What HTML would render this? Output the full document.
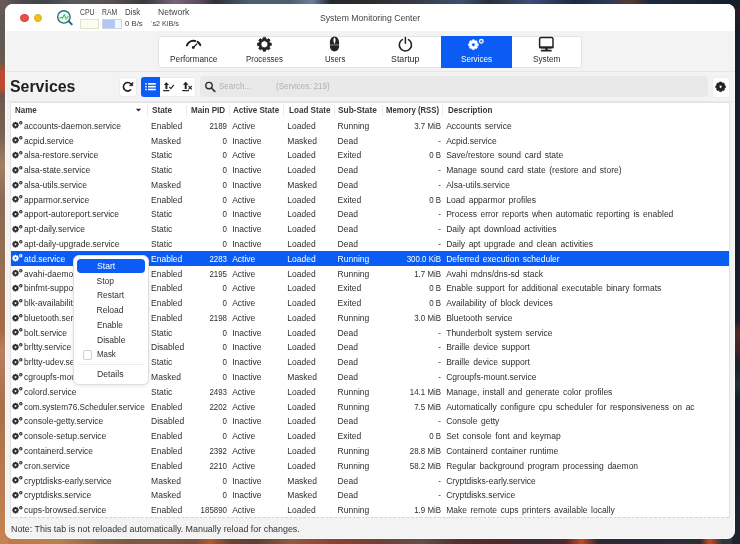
<!DOCTYPE html><html><head><meta charset="utf-8"><style>
html,body{margin:0;padding:0}
body{width:740px;height:544px;overflow:hidden;position:relative;font-family:"Liberation Sans", sans-serif}
.a{position:absolute}
.t{position:absolute;white-space:pre;line-height:1.15;font-family:"Liberation Sans", sans-serif}
</style></head><body>
<div class="a" style="left:0.00px;top:0.00px;width:740.00px;height:8.00px;background:linear-gradient(90deg,#6a5a55 0.0%,#4a4a4c 2.7%,#404448 6.1%,#585a5e 10.1%,#5a5050 14.9%,#3a3a40 19.6%,#7a6478 23.6%,#5a4a5a 27.0%,#303038 29.1%,#4a6070 33.8%,#4a6070 39.2%,#6a80a0 42.2%,#282830 44.6%,#302a2e 50.0%,#383c48 56.8%,#3a5070 62.2%,#2a2e38 66.2%,#3a4e7a 71.6%,#202a40 77.7%,#2a3a5a 82.4%,#5a3a2a 85.1%,#1e2840 87.8%,#1a2438 94.6%,#141c28 100.0%)"></div>
<div class="a" style="left:0.00px;top:536.00px;width:740.00px;height:8.00px;background:linear-gradient(90deg,#c87840 0.0%,#bc7c4c 2.0%,#b88050 8.1%,#8a6448 13.5%,#7a5a44 17.6%,#805842 21.6%,#7a5040 26.4%,#b05a30 28.4%,#6a4434 31.1%,#5a4034 34.5%,#905a40 39.2%,#8a4030 45.9%,#704038 51.4%,#605048 56.8%,#503030 62.2%,#502828 67.6%,#383038 73.0%,#502828 76.4%,#c04a28 78.6%,#2e2a32 80.8%,#282c38 87.8%,#2c2c34 94.6%,#c84a20 95.9%,#2a383c 97.6%,#28383c 100.0%)"></div>
<div class="a" style="left:0.00px;top:0.00px;width:8.00px;height:544.00px;background:linear-gradient(180deg,#6a5a55 0.0%,#5e5856 5.5%,#6a5850 11.4%,#b84a30 13.2%,#c04a30 16.2%,#6a5850 17.6%,#7a6452 25.0%,#a08064 30.3%,#8a6a55 36.8%,#96704f 50.0%,#a86a48 60.7%,#b88060 64.3%,#a87048 75.0%,#b87a50 88.2%,#c8844e 100.0%)"></div>
<div class="a" style="left:732.00px;top:0.00px;width:8.00px;height:544.00px;background:linear-gradient(180deg,#161c2a 0.0%,#2a1c24 2.2%,#161c2a 5.5%,#1a1e2c 58.8%,#4a2a28 61.0%,#3a2228 64.7%,#1a1e2c 67.1%,#1e3038 70.8%,#161c2a 73.5%,#1e2430 100.0%)"></div>
<div class="a" style="left:5px;top:4px;width:730px;height:535px;border-radius:8px;overflow:hidden;background:#f3f3f3;will-change:transform">
<div class="a" style="left:-5px;top:-4px;width:740px;height:544px">
<div class="a" style="left:5.00px;top:4.00px;width:730.00px;height:27.00px;background:#ffffff"></div>
<div class="a" style="left:20.1px;top:13.5px;width:8.8px;height:8.8px;box-sizing:border-box;border-radius:50%;background:#ea5048;border:0.6px solid #d8433f"></div>
<div class="a" style="left:33.5px;top:13.5px;width:8.8px;height:8.8px;box-sizing:border-box;border-radius:50%;background:#f4c01e;border:0.6px solid #dcaa1a"></div>
<svg class="a" style="left:54px;top:8px" width="22" height="20" viewBox="54 8 22 20"><circle cx="63.9" cy="16.9" r="6.2" fill="#ecf9f4" stroke="#2d6e80" stroke-width="1.4"/><path d="M59.6,18.3 L61.4,17.2 L62.5,18.3 L64.3,14.5 L66.1,19.1 L68.3,16" fill="none" stroke="#58bc5c" stroke-width="1.1" stroke-linejoin="round"/><path d="M68.9,21.4 L71.7,24.3" stroke="#2a6a8e" stroke-width="2" stroke-linecap="round"/></svg>
<div class="t" style="left:79.90px;top:8px;font-size:8.4px;font-weight:400;color:#444;transform:scaleX(0.8198);transform-origin:left;">CPU</div>
<div class="t" style="left:102.00px;top:8px;font-size:8.4px;font-weight:400;color:#444;transform:scaleX(0.8161);transform-origin:left;">RAM</div>
<div class="t" style="left:124.60px;top:8px;font-size:8.4px;font-weight:400;color:#444;transform:scaleX(0.9327);transform-origin:left;">Disk</div>
<div class="t" style="left:158.00px;top:8px;font-size:8.4px;font-weight:400;color:#444;transform:scaleX(1.0222);transform-origin:left;">Network</div>
<div class="a" style="left:80.00px;top:19.00px;width:19.00px;height:9.50px;box-sizing:border-box;border:1px solid #dce4cc;background:#fbfdf4"></div>
<div class="a" style="left:101.80px;top:19.00px;width:19.90px;height:9.50px;box-sizing:border-box;border:1px solid #cdd5e4;background:linear-gradient(90deg,#b4c7f4 0%,#b4c7f4 64%,#f5f8ff 64%)"></div>
<div class="t" style="left:124.60px;top:19px;font-size:8.0px;font-weight:400;color:#444;transform:scaleX(0.9707);transform-origin:left;">0 B/s</div>
<div class="t" style="left:149.90px;top:19px;font-size:8.0px;font-weight:400;color:#444;transform:scaleX(0.9027);transform-origin:left;">ˈs2 KiB/s</div>
<div class="t" style="left:319.90px;top:12px;font-size:9.8px;font-weight:400;color:#444;transform:scaleX(0.8846);transform-origin:left;">System Monitoring Center</div>
<div class="a" style="left:158.00px;top:36.00px;width:424.00px;height:31.50px;box-sizing:border-box;border:1px solid #e2e2e2;border-radius:3px;background:#fff"></div>
<div class="a" style="left:441.20px;top:36.00px;width:70.60px;height:31.50px;background:#0a5cf4"></div>
<div class="t" style="left:170.30px;top:55px;font-size:8.5px;font-weight:400;color:#2a2a2a;transform:scaleX(0.9739);transform-origin:left;">Performance</div>
<div class="t" style="left:246.30px;top:55px;font-size:8.5px;font-weight:400;color:#2a2a2a;transform:scaleX(0.9298);transform-origin:left;">Processes</div>
<div class="t" style="left:324.70px;top:55px;font-size:8.5px;font-weight:400;color:#2a2a2a;transform:scaleX(0.9143);transform-origin:left;">Users</div>
<div class="t" style="left:391.20px;top:55px;font-size:8.5px;font-weight:400;color:#2a2a2a;transform:scaleX(1.0363);transform-origin:left;">Startup</div>
<div class="t" style="left:461.00px;top:55px;font-size:8.5px;font-weight:400;color:#fff;transform:scaleX(0.9511);transform-origin:left;">Services</div>
<div class="t" style="left:532.60px;top:55px;font-size:8.5px;font-weight:400;color:#2a2a2a;transform:scaleX(0.9702);transform-origin:left;">System</div>
<svg class="a" style="left:180px;top:34px" width="30" height="20" viewBox="180 34 30 20"><path d="M186.9,45.4 A7.3,7.3 0 0,1 195.3,40.9" fill="none" stroke="#1e1e1e" stroke-width="2" stroke-linecap="round"/><path d="M197.6,41.9 A7.3,7.3 0 0,1 200.3,45.1" fill="none" stroke="#1e1e1e" stroke-width="2" stroke-linecap="round"/><path d="M193.2,47.6 L196.8,44" stroke="#1e1e1e" stroke-width="1.2" stroke-linecap="round"/><circle cx="193.3" cy="47.5" r="1.4" fill="#1e1e1e"/></svg>
<svg class="a" style="left:250px;top:34px" width="30" height="20" viewBox="250 34 30 20"><path fill-rule="evenodd" fill="#222" d="M263.03,38.97 L263.25,37.39 L265.55,37.39 L265.77,38.97 L267.20,39.57 L268.47,38.60 L270.10,40.23 L269.13,41.50 L269.73,42.93 L271.31,43.15 L271.31,45.45 L269.73,45.67 L269.13,47.10 L270.10,48.37 L268.47,50.00 L267.20,49.03 L265.77,49.63 L265.55,51.21 L263.25,51.21 L263.03,49.63 L261.60,49.03 L260.33,50.00 L258.70,48.37 L259.67,47.10 L259.07,45.67 L257.49,45.45 L257.49,43.15 L259.07,42.93 L259.67,41.50 L258.70,40.23 L260.33,38.60 L261.60,39.57 Z M267.90,44.30 A3.5,3.5 0 1,0 260.90,44.30 A3.5,3.5 0 1,0 267.90,44.30 Z" stroke="#222" stroke-width="0.8" stroke-linejoin="round"/></svg>
<svg class="a" style="left:320px;top:34px" width="30" height="20" viewBox="320 34 30 20"><path fill-rule="evenodd" fill="#222" d="M334.5,36.6 C331.8,36.6 329.9,39.5 329.9,42.5 L329.9,46 C329.9,49.2 332,51.4 334.5,51.4 C337,51.4 339.1,49.2 339.1,46 L339.1,42.5 C339.1,39.5 337.2,36.6 334.5,36.6 Z M334.5,37.6 C335.8,38.4 336.1,40.6 334.5,44.2 C332.9,40.6 333.2,38.4 334.5,37.6 Z"/><rect x="329.5" y="44.7" width="10" height="0.55" fill="#e8e8e8"/></svg>
<svg class="a" style="left:390px;top:34px" width="30" height="20" viewBox="390 34 30 20"><path d="M402.3,39.6 A6.1,6.1 0 1,0 408.5,39.6" fill="none" stroke="#222" stroke-width="1.6" stroke-linecap="round"/><path d="M405.4,37.6 L405.4,43.2" stroke="#222" stroke-width="1.5" stroke-linecap="round"/></svg>
<svg class="a" style="left:460px;top:34px" width="30" height="20" viewBox="460 34 30 20"><path fill-rule="evenodd" fill="#fff" d="M472.16,40.79 L472.42,39.80 L474.38,39.80 L474.64,40.79 L475.29,41.06 L476.18,40.54 L477.56,41.92 L477.04,42.81 L477.31,43.46 L478.30,43.72 L478.30,45.68 L477.31,45.94 L477.04,46.59 L477.56,47.48 L476.18,48.86 L475.29,48.34 L474.64,48.61 L474.38,49.60 L472.42,49.60 L472.16,48.61 L471.51,48.34 L470.62,48.86 L469.24,47.48 L469.76,46.59 L469.49,45.94 L468.50,45.68 L468.50,43.72 L469.49,43.46 L469.76,42.81 L469.24,41.92 L470.62,40.54 L471.51,41.06 Z M475.20,44.70 A1.8,1.8 0 1,0 471.60,44.70 A1.8,1.8 0 1,0 475.20,44.70 Z" stroke="#fff" stroke-width="0.6" stroke-linejoin="round"/><circle cx="481.3" cy="41.3" r="1.8" fill="none" stroke="#fff" stroke-width="1.3"/></svg>
<svg class="a" style="left:530px;top:34px" width="30" height="20" viewBox="530 34 30 20"><rect x="539.6" y="37.5" width="13.4" height="10.2" rx="1.6" fill="none" stroke="#222" stroke-width="1.5"/><rect x="539" y="46.3" width="14.6" height="2" fill="#222"/><rect x="545.3" y="48" width="2.4" height="2.2" fill="#222"/><rect x="540.8" y="49.8" width="11" height="1.8" rx="0.9" fill="#222"/></svg>
<div class="a" style="left:5.00px;top:70.50px;width:730.00px;height:1.00px;background:#e6e6e6"></div>
<div class="a" style="left:5.00px;top:100.80px;width:730.00px;height:1.00px;background:#e8e8e8"></div>
<div class="t" style="left:10.40px;top:78px;font-size:16px;font-weight:700;color:#1e1e1e;transform:scaleX(0.9933);transform-origin:left;">Services</div>
<div class="a" style="left:119.00px;top:77.00px;width:18.00px;height:20.00px;box-sizing:border-box;border:1px solid #ebebeb;border-radius:3px;background:#fff"></div>
<svg class="a" style="left:116px;top:75px" width="24" height="25" viewBox="116 75 24 25"><path d="M130.9,83.9 A4.3,4.3 0 1,0 131.0,89.6" fill="none" stroke="#1e1e1e" stroke-width="1.6"/><path d="M132.8,82 L132.8,85.7 L129.2,85.7 Z" fill="#1e1e1e" stroke="#1e1e1e" stroke-width="0.5" stroke-linejoin="round"/></svg>
<div class="a" style="left:141.00px;top:77.00px;width:55.00px;height:20.00px;box-sizing:border-box;border:1px solid #ebebeb;border-radius:3px;background:#fff"></div>
<div class="a" style="left:141.00px;top:77.00px;width:19.00px;height:20.00px;background:#0a5cf4;border-radius:3px 0 0 3px"></div>
<svg class="a" style="left:140px;top:76px" width="20" height="22" viewBox="140 76 20 22"><g fill="#fff"><rect x="145.2" y="83.2" width="1.6" height="1.4"/><rect x="145.2" y="86" width="1.6" height="1.4"/><rect x="145.2" y="88.8" width="1.6" height="1.4"/><rect x="148" y="83.1" width="7.8" height="1.6"/><rect x="148" y="85.9" width="7.8" height="1.6"/><rect x="148" y="88.7" width="7.8" height="1.6"/></g></svg>
<svg class="a" style="left:160px;top:76px" width="36" height="22" viewBox="160 76 36 22"><g fill="#222"><path d="M166.4,82.2 L169,84.9 L167.4,84.9 L167.4,89 L165.4,89 L165.4,84.9 L163.8,84.9 Z"/><rect x="163.1" y="90" width="6.3" height="1.3" rx="0.4"/></g><path d="M169.4,86.8 L170.9,88.6 L173.8,84.9" fill="none" stroke="#222" stroke-width="1.1"/><g fill="#222"><path d="M185.7,81.8 L188.5,84.7 L186.7,84.7 L186.7,89 L184.7,89 L184.7,84.7 L182.9,84.7 Z"/><rect x="182.2" y="90" width="6.8" height="1.3" rx="0.4"/></g><path d="M188.4,86 L191.9,89.4 M191.9,86 L188.4,89.4" fill="none" stroke="#222" stroke-width="1.05"/></svg>
<div class="a" style="left:199.80px;top:76.40px;width:508.20px;height:21.00px;background:#e9e9e9;border-radius:4px"></div>
<svg class="a" style="left:200px;top:78px" width="20" height="18" viewBox="200 78 20 18"><circle cx="209" cy="85.6" r="3.2" fill="none" stroke="#2e2e2e" stroke-width="1.4"/><path d="M211.4,88 L214.8,91.4" stroke="#2e2e2e" stroke-width="1.6" stroke-linecap="round"/></svg>
<div class="t" style="left:218.80px;top:82px;font-size:8.5px;font-weight:400;color:#b0b0b0;transform:scaleX(0.9403);transform-origin:left;">Search...</div>
<div class="t" style="left:276.40px;top:82px;font-size:8.5px;font-weight:400;color:#b0b0b0;transform:scaleX(0.9375);transform-origin:left;">(Services: 219)</div>
<div class="a" style="left:711.50px;top:76.50px;width:18.00px;height:21.00px;box-sizing:border-box;border:1px solid #ededed;border-radius:3px;background:#fff"></div>
<svg class="a" style="left:710px;top:76px" width="22" height="22" viewBox="710 76 22 22"><path fill-rule="evenodd" fill="#222" d="M719.36,83.00 L719.64,81.99 L721.56,81.99 L721.84,83.00 L722.42,83.24 L723.32,82.73 L724.67,84.08 L724.16,84.98 L724.40,85.56 L725.41,85.84 L725.41,87.76 L724.40,88.04 L724.16,88.62 L724.67,89.52 L723.32,90.87 L722.42,90.36 L721.84,90.60 L721.56,91.61 L719.64,91.61 L719.36,90.60 L718.78,90.36 L717.88,90.87 L716.53,89.52 L717.04,88.62 L716.80,88.04 L715.79,87.76 L715.79,85.84 L716.80,85.56 L717.04,84.98 L716.53,84.08 L717.88,82.73 L718.78,83.24 Z M722.05,86.80 A1.45,1.45 0 1,0 719.15,86.80 A1.45,1.45 0 1,0 722.05,86.80 Z" stroke="#222" stroke-width="0.7" stroke-linejoin="round"/></svg>
<div class="a" style="left:10.30px;top:102.30px;width:719.40px;height:416.10px;box-sizing:border-box;border:1px solid #e2e2e2;background:#fff"></div>
<div class="t" style="left:15.00px;top:106px;font-size:8.5px;font-weight:700;color:#383838;transform:scaleX(0.9328);transform-origin:left;">Name</div>
<div class="t" style="left:152.10px;top:106px;font-size:8.5px;font-weight:700;color:#383838;transform:scaleX(0.9713);transform-origin:left;">State</div>
<div class="t" style="left:191.00px;top:106px;font-size:8.5px;font-weight:700;color:#383838;transform:scaleX(0.9497);transform-origin:left;">Main PID</div>
<div class="t" style="left:233.10px;top:106px;font-size:8.5px;font-weight:700;color:#383838;transform:scaleX(0.9492);transform-origin:left;">Active State</div>
<div class="t" style="left:288.50px;top:106px;font-size:8.5px;font-weight:700;color:#383838;transform:scaleX(0.9528);transform-origin:left;">Load State</div>
<div class="t" style="left:338.40px;top:106px;font-size:8.5px;font-weight:700;color:#383838;transform:scaleX(0.9805);transform-origin:left;">Sub-State</div>
<div class="t" style="left:386.30px;top:106px;font-size:8.5px;font-weight:700;color:#383838;transform:scaleX(0.9123);transform-origin:left;">Memory (RSS)</div>
<div class="t" style="left:447.60px;top:106px;font-size:8.5px;font-weight:700;color:#383838;transform:scaleX(0.9473);transform-origin:left;">Description</div>
<svg class="a" style="left:134px;top:107px" width="8" height="6" viewBox="134 107 8 6"><path d="M135.8,108.7 L141.2,108.7 L138.5,111.6 Z" fill="#2e2e2e"/></svg>
<div class="a" style="left:146.70px;top:104.60px;width:1.00px;height:11.80px;background:#ebebeb"></div>
<div class="a" style="left:186.40px;top:104.60px;width:1.00px;height:11.80px;background:#ebebeb"></div>
<div class="a" style="left:229.00px;top:104.60px;width:1.00px;height:11.80px;background:#ebebeb"></div>
<div class="a" style="left:283.00px;top:104.60px;width:1.00px;height:11.80px;background:#ebebeb"></div>
<div class="a" style="left:333.50px;top:104.60px;width:1.00px;height:11.80px;background:#ebebeb"></div>
<div class="a" style="left:381.70px;top:104.60px;width:1.00px;height:11.80px;background:#ebebeb"></div>
<div class="a" style="left:442.00px;top:104.60px;width:1.00px;height:11.80px;background:#ebebeb"></div>
<div class="a" style="left:11px;top:103px;width:718px;height:414.6px;overflow:hidden">
<div class="a" style="left:-11px;top:-103px;width:740px;height:544px">
<svg class="a" style="left:11px;top:118.40px" width="14" height="15" viewBox="11 0 14 15"><path fill-rule="evenodd" fill="#2a2a2a" stroke="#2a2a2a" stroke-width="0.35" stroke-linejoin="round" d="M14.70,4.73 L14.88,4.06 L16.12,4.06 L16.30,4.73 L16.68,4.88 L17.28,4.54 L18.16,5.42 L17.82,6.02 L17.97,6.40 L18.64,6.58 L18.64,7.82 L17.97,8.00 L17.82,8.38 L18.16,8.98 L17.28,9.86 L16.68,9.52 L16.30,9.67 L16.12,10.34 L14.88,10.34 L14.70,9.67 L14.32,9.52 L13.72,9.86 L12.84,8.98 L13.18,8.38 L13.03,8.00 L12.36,7.82 L12.36,6.58 L13.03,6.40 L13.18,6.02 L12.84,5.42 L13.72,4.54 L14.32,4.88 Z M16.60,7.20 A1.1,1.1 0 1,0 14.40,7.20 A1.1,1.1 0 1,0 16.60,7.20 Z"/><circle cx="20.8" cy="4.8" r="1.2" fill="none" stroke="#2a2a2a" stroke-width="1.05"/></svg>
<div class="t" style="left:24.10px;top:122px;font-size:8.5px;font-weight:400;color:#2e2e2e;">accounts-daemon.service</div>
<div class="t" style="left:151.10px;top:122px;font-size:8.5px;font-weight:400;color:#2e2e2e;">Enabled</div>
<div class="t" style="left:-72.60px;width:300px;text-align:right;top:122px;font-size:8.5px;font-weight:400;color:#2e2e2e;transform:scaleX(0.9300);transform-origin:right;">2189</div>
<div class="t" style="left:232.20px;top:122px;font-size:8.5px;font-weight:400;color:#2e2e2e;">Active</div>
<div class="t" style="left:287.30px;top:122px;font-size:8.5px;font-weight:400;color:#2e2e2e;">Loaded</div>
<div class="t" style="left:337.60px;top:122px;font-size:8.5px;font-weight:400;color:#2e2e2e;">Running</div>
<div class="t" style="left:140.60px;width:300px;text-align:right;top:122px;font-size:8.5px;font-weight:400;color:#2e2e2e;transform:scaleX(0.9300);transform-origin:right;">3.7 MiB</div>
<div class="t" style="left:446.20px;top:122px;font-size:8.5px;font-weight:400;color:#2e2e2e;word-spacing:1.2px;">Accounts service</div>
<svg class="a" style="left:11px;top:133.18px" width="14" height="15" viewBox="11 0 14 15"><path fill-rule="evenodd" fill="#2a2a2a" stroke="#2a2a2a" stroke-width="0.35" stroke-linejoin="round" d="M14.70,4.73 L14.88,4.06 L16.12,4.06 L16.30,4.73 L16.68,4.88 L17.28,4.54 L18.16,5.42 L17.82,6.02 L17.97,6.40 L18.64,6.58 L18.64,7.82 L17.97,8.00 L17.82,8.38 L18.16,8.98 L17.28,9.86 L16.68,9.52 L16.30,9.67 L16.12,10.34 L14.88,10.34 L14.70,9.67 L14.32,9.52 L13.72,9.86 L12.84,8.98 L13.18,8.38 L13.03,8.00 L12.36,7.82 L12.36,6.58 L13.03,6.40 L13.18,6.02 L12.84,5.42 L13.72,4.54 L14.32,4.88 Z M16.60,7.20 A1.1,1.1 0 1,0 14.40,7.20 A1.1,1.1 0 1,0 16.60,7.20 Z"/><circle cx="20.8" cy="4.8" r="1.2" fill="none" stroke="#2a2a2a" stroke-width="1.05"/></svg>
<div class="t" style="left:24.10px;top:137px;font-size:8.5px;font-weight:400;color:#2e2e2e;">acpid.service</div>
<div class="t" style="left:151.10px;top:137px;font-size:8.5px;font-weight:400;color:#2e2e2e;">Masked</div>
<div class="t" style="left:-72.60px;width:300px;text-align:right;top:137px;font-size:8.5px;font-weight:400;color:#2e2e2e;transform:scaleX(0.9300);transform-origin:right;">0</div>
<div class="t" style="left:232.20px;top:137px;font-size:8.5px;font-weight:400;color:#2e2e2e;">Inactive</div>
<div class="t" style="left:287.30px;top:137px;font-size:8.5px;font-weight:400;color:#2e2e2e;">Masked</div>
<div class="t" style="left:337.60px;top:137px;font-size:8.5px;font-weight:400;color:#2e2e2e;">Dead</div>
<div class="t" style="left:140.60px;width:300px;text-align:right;top:137px;font-size:8.5px;font-weight:400;color:#2e2e2e;transform:scaleX(0.9300);transform-origin:right;">-</div>
<div class="t" style="left:446.20px;top:137px;font-size:8.5px;font-weight:400;color:#2e2e2e;word-spacing:1.2px;">Acpid.service</div>
<svg class="a" style="left:11px;top:147.96px" width="14" height="15" viewBox="11 0 14 15"><path fill-rule="evenodd" fill="#2a2a2a" stroke="#2a2a2a" stroke-width="0.35" stroke-linejoin="round" d="M14.70,4.73 L14.88,4.06 L16.12,4.06 L16.30,4.73 L16.68,4.88 L17.28,4.54 L18.16,5.42 L17.82,6.02 L17.97,6.40 L18.64,6.58 L18.64,7.82 L17.97,8.00 L17.82,8.38 L18.16,8.98 L17.28,9.86 L16.68,9.52 L16.30,9.67 L16.12,10.34 L14.88,10.34 L14.70,9.67 L14.32,9.52 L13.72,9.86 L12.84,8.98 L13.18,8.38 L13.03,8.00 L12.36,7.82 L12.36,6.58 L13.03,6.40 L13.18,6.02 L12.84,5.42 L13.72,4.54 L14.32,4.88 Z M16.60,7.20 A1.1,1.1 0 1,0 14.40,7.20 A1.1,1.1 0 1,0 16.60,7.20 Z"/><circle cx="20.8" cy="4.8" r="1.2" fill="none" stroke="#2a2a2a" stroke-width="1.05"/></svg>
<div class="t" style="left:24.10px;top:151px;font-size:8.5px;font-weight:400;color:#2e2e2e;">alsa-restore.service</div>
<div class="t" style="left:151.10px;top:151px;font-size:8.5px;font-weight:400;color:#2e2e2e;">Static</div>
<div class="t" style="left:-72.60px;width:300px;text-align:right;top:151px;font-size:8.5px;font-weight:400;color:#2e2e2e;transform:scaleX(0.9300);transform-origin:right;">0</div>
<div class="t" style="left:232.20px;top:151px;font-size:8.5px;font-weight:400;color:#2e2e2e;">Active</div>
<div class="t" style="left:287.30px;top:151px;font-size:8.5px;font-weight:400;color:#2e2e2e;">Loaded</div>
<div class="t" style="left:337.60px;top:151px;font-size:8.5px;font-weight:400;color:#2e2e2e;">Exited</div>
<div class="t" style="left:140.60px;width:300px;text-align:right;top:151px;font-size:8.5px;font-weight:400;color:#2e2e2e;transform:scaleX(0.9300);transform-origin:right;">0 B</div>
<div class="t" style="left:446.20px;top:151px;font-size:8.5px;font-weight:400;color:#2e2e2e;word-spacing:1.2px;">Save/restore sound card state</div>
<svg class="a" style="left:11px;top:162.74px" width="14" height="15" viewBox="11 0 14 15"><path fill-rule="evenodd" fill="#2a2a2a" stroke="#2a2a2a" stroke-width="0.35" stroke-linejoin="round" d="M14.70,4.73 L14.88,4.06 L16.12,4.06 L16.30,4.73 L16.68,4.88 L17.28,4.54 L18.16,5.42 L17.82,6.02 L17.97,6.40 L18.64,6.58 L18.64,7.82 L17.97,8.00 L17.82,8.38 L18.16,8.98 L17.28,9.86 L16.68,9.52 L16.30,9.67 L16.12,10.34 L14.88,10.34 L14.70,9.67 L14.32,9.52 L13.72,9.86 L12.84,8.98 L13.18,8.38 L13.03,8.00 L12.36,7.82 L12.36,6.58 L13.03,6.40 L13.18,6.02 L12.84,5.42 L13.72,4.54 L14.32,4.88 Z M16.60,7.20 A1.1,1.1 0 1,0 14.40,7.20 A1.1,1.1 0 1,0 16.60,7.20 Z"/><circle cx="20.8" cy="4.8" r="1.2" fill="none" stroke="#2a2a2a" stroke-width="1.05"/></svg>
<div class="t" style="left:24.10px;top:166px;font-size:8.5px;font-weight:400;color:#2e2e2e;">alsa-state.service</div>
<div class="t" style="left:151.10px;top:166px;font-size:8.5px;font-weight:400;color:#2e2e2e;">Static</div>
<div class="t" style="left:-72.60px;width:300px;text-align:right;top:166px;font-size:8.5px;font-weight:400;color:#2e2e2e;transform:scaleX(0.9300);transform-origin:right;">0</div>
<div class="t" style="left:232.20px;top:166px;font-size:8.5px;font-weight:400;color:#2e2e2e;">Inactive</div>
<div class="t" style="left:287.30px;top:166px;font-size:8.5px;font-weight:400;color:#2e2e2e;">Loaded</div>
<div class="t" style="left:337.60px;top:166px;font-size:8.5px;font-weight:400;color:#2e2e2e;">Dead</div>
<div class="t" style="left:140.60px;width:300px;text-align:right;top:166px;font-size:8.5px;font-weight:400;color:#2e2e2e;transform:scaleX(0.9300);transform-origin:right;">-</div>
<div class="t" style="left:446.20px;top:166px;font-size:8.5px;font-weight:400;color:#2e2e2e;word-spacing:1.2px;">Manage sound card state (restore and store)</div>
<svg class="a" style="left:11px;top:177.52px" width="14" height="15" viewBox="11 0 14 15"><path fill-rule="evenodd" fill="#2a2a2a" stroke="#2a2a2a" stroke-width="0.35" stroke-linejoin="round" d="M14.70,4.73 L14.88,4.06 L16.12,4.06 L16.30,4.73 L16.68,4.88 L17.28,4.54 L18.16,5.42 L17.82,6.02 L17.97,6.40 L18.64,6.58 L18.64,7.82 L17.97,8.00 L17.82,8.38 L18.16,8.98 L17.28,9.86 L16.68,9.52 L16.30,9.67 L16.12,10.34 L14.88,10.34 L14.70,9.67 L14.32,9.52 L13.72,9.86 L12.84,8.98 L13.18,8.38 L13.03,8.00 L12.36,7.82 L12.36,6.58 L13.03,6.40 L13.18,6.02 L12.84,5.42 L13.72,4.54 L14.32,4.88 Z M16.60,7.20 A1.1,1.1 0 1,0 14.40,7.20 A1.1,1.1 0 1,0 16.60,7.20 Z"/><circle cx="20.8" cy="4.8" r="1.2" fill="none" stroke="#2a2a2a" stroke-width="1.05"/></svg>
<div class="t" style="left:24.10px;top:181px;font-size:8.5px;font-weight:400;color:#2e2e2e;">alsa-utils.service</div>
<div class="t" style="left:151.10px;top:181px;font-size:8.5px;font-weight:400;color:#2e2e2e;">Masked</div>
<div class="t" style="left:-72.60px;width:300px;text-align:right;top:181px;font-size:8.5px;font-weight:400;color:#2e2e2e;transform:scaleX(0.9300);transform-origin:right;">0</div>
<div class="t" style="left:232.20px;top:181px;font-size:8.5px;font-weight:400;color:#2e2e2e;">Inactive</div>
<div class="t" style="left:287.30px;top:181px;font-size:8.5px;font-weight:400;color:#2e2e2e;">Masked</div>
<div class="t" style="left:337.60px;top:181px;font-size:8.5px;font-weight:400;color:#2e2e2e;">Dead</div>
<div class="t" style="left:140.60px;width:300px;text-align:right;top:181px;font-size:8.5px;font-weight:400;color:#2e2e2e;transform:scaleX(0.9300);transform-origin:right;">-</div>
<div class="t" style="left:446.20px;top:181px;font-size:8.5px;font-weight:400;color:#2e2e2e;word-spacing:1.2px;">Alsa-utils.service</div>
<svg class="a" style="left:11px;top:192.30px" width="14" height="15" viewBox="11 0 14 15"><path fill-rule="evenodd" fill="#2a2a2a" stroke="#2a2a2a" stroke-width="0.35" stroke-linejoin="round" d="M14.70,4.73 L14.88,4.06 L16.12,4.06 L16.30,4.73 L16.68,4.88 L17.28,4.54 L18.16,5.42 L17.82,6.02 L17.97,6.40 L18.64,6.58 L18.64,7.82 L17.97,8.00 L17.82,8.38 L18.16,8.98 L17.28,9.86 L16.68,9.52 L16.30,9.67 L16.12,10.34 L14.88,10.34 L14.70,9.67 L14.32,9.52 L13.72,9.86 L12.84,8.98 L13.18,8.38 L13.03,8.00 L12.36,7.82 L12.36,6.58 L13.03,6.40 L13.18,6.02 L12.84,5.42 L13.72,4.54 L14.32,4.88 Z M16.60,7.20 A1.1,1.1 0 1,0 14.40,7.20 A1.1,1.1 0 1,0 16.60,7.20 Z"/><circle cx="20.8" cy="4.8" r="1.2" fill="none" stroke="#2a2a2a" stroke-width="1.05"/></svg>
<div class="t" style="left:24.10px;top:196px;font-size:8.5px;font-weight:400;color:#2e2e2e;">apparmor.service</div>
<div class="t" style="left:151.10px;top:196px;font-size:8.5px;font-weight:400;color:#2e2e2e;">Enabled</div>
<div class="t" style="left:-72.60px;width:300px;text-align:right;top:196px;font-size:8.5px;font-weight:400;color:#2e2e2e;transform:scaleX(0.9300);transform-origin:right;">0</div>
<div class="t" style="left:232.20px;top:196px;font-size:8.5px;font-weight:400;color:#2e2e2e;">Active</div>
<div class="t" style="left:287.30px;top:196px;font-size:8.5px;font-weight:400;color:#2e2e2e;">Loaded</div>
<div class="t" style="left:337.60px;top:196px;font-size:8.5px;font-weight:400;color:#2e2e2e;">Exited</div>
<div class="t" style="left:140.60px;width:300px;text-align:right;top:196px;font-size:8.5px;font-weight:400;color:#2e2e2e;transform:scaleX(0.9300);transform-origin:right;">0 B</div>
<div class="t" style="left:446.20px;top:196px;font-size:8.5px;font-weight:400;color:#2e2e2e;word-spacing:1.2px;">Load apparmor profiles</div>
<svg class="a" style="left:11px;top:207.08px" width="14" height="15" viewBox="11 0 14 15"><path fill-rule="evenodd" fill="#2a2a2a" stroke="#2a2a2a" stroke-width="0.35" stroke-linejoin="round" d="M14.70,4.73 L14.88,4.06 L16.12,4.06 L16.30,4.73 L16.68,4.88 L17.28,4.54 L18.16,5.42 L17.82,6.02 L17.97,6.40 L18.64,6.58 L18.64,7.82 L17.97,8.00 L17.82,8.38 L18.16,8.98 L17.28,9.86 L16.68,9.52 L16.30,9.67 L16.12,10.34 L14.88,10.34 L14.70,9.67 L14.32,9.52 L13.72,9.86 L12.84,8.98 L13.18,8.38 L13.03,8.00 L12.36,7.82 L12.36,6.58 L13.03,6.40 L13.18,6.02 L12.84,5.42 L13.72,4.54 L14.32,4.88 Z M16.60,7.20 A1.1,1.1 0 1,0 14.40,7.20 A1.1,1.1 0 1,0 16.60,7.20 Z"/><circle cx="20.8" cy="4.8" r="1.2" fill="none" stroke="#2a2a2a" stroke-width="1.05"/></svg>
<div class="t" style="left:24.10px;top:210px;font-size:8.5px;font-weight:400;color:#2e2e2e;">apport-autoreport.service</div>
<div class="t" style="left:151.10px;top:210px;font-size:8.5px;font-weight:400;color:#2e2e2e;">Static</div>
<div class="t" style="left:-72.60px;width:300px;text-align:right;top:210px;font-size:8.5px;font-weight:400;color:#2e2e2e;transform:scaleX(0.9300);transform-origin:right;">0</div>
<div class="t" style="left:232.20px;top:210px;font-size:8.5px;font-weight:400;color:#2e2e2e;">Inactive</div>
<div class="t" style="left:287.30px;top:210px;font-size:8.5px;font-weight:400;color:#2e2e2e;">Loaded</div>
<div class="t" style="left:337.60px;top:210px;font-size:8.5px;font-weight:400;color:#2e2e2e;">Dead</div>
<div class="t" style="left:140.60px;width:300px;text-align:right;top:210px;font-size:8.5px;font-weight:400;color:#2e2e2e;transform:scaleX(0.9300);transform-origin:right;">-</div>
<div class="t" style="left:446.20px;top:210px;font-size:8.5px;font-weight:400;color:#2e2e2e;word-spacing:1.2px;">Process error reports when automatic reporting is enabled</div>
<svg class="a" style="left:11px;top:221.86px" width="14" height="15" viewBox="11 0 14 15"><path fill-rule="evenodd" fill="#2a2a2a" stroke="#2a2a2a" stroke-width="0.35" stroke-linejoin="round" d="M14.70,4.73 L14.88,4.06 L16.12,4.06 L16.30,4.73 L16.68,4.88 L17.28,4.54 L18.16,5.42 L17.82,6.02 L17.97,6.40 L18.64,6.58 L18.64,7.82 L17.97,8.00 L17.82,8.38 L18.16,8.98 L17.28,9.86 L16.68,9.52 L16.30,9.67 L16.12,10.34 L14.88,10.34 L14.70,9.67 L14.32,9.52 L13.72,9.86 L12.84,8.98 L13.18,8.38 L13.03,8.00 L12.36,7.82 L12.36,6.58 L13.03,6.40 L13.18,6.02 L12.84,5.42 L13.72,4.54 L14.32,4.88 Z M16.60,7.20 A1.1,1.1 0 1,0 14.40,7.20 A1.1,1.1 0 1,0 16.60,7.20 Z"/><circle cx="20.8" cy="4.8" r="1.2" fill="none" stroke="#2a2a2a" stroke-width="1.05"/></svg>
<div class="t" style="left:24.10px;top:225px;font-size:8.5px;font-weight:400;color:#2e2e2e;">apt-daily.service</div>
<div class="t" style="left:151.10px;top:225px;font-size:8.5px;font-weight:400;color:#2e2e2e;">Static</div>
<div class="t" style="left:-72.60px;width:300px;text-align:right;top:225px;font-size:8.5px;font-weight:400;color:#2e2e2e;transform:scaleX(0.9300);transform-origin:right;">0</div>
<div class="t" style="left:232.20px;top:225px;font-size:8.5px;font-weight:400;color:#2e2e2e;">Inactive</div>
<div class="t" style="left:287.30px;top:225px;font-size:8.5px;font-weight:400;color:#2e2e2e;">Loaded</div>
<div class="t" style="left:337.60px;top:225px;font-size:8.5px;font-weight:400;color:#2e2e2e;">Dead</div>
<div class="t" style="left:140.60px;width:300px;text-align:right;top:225px;font-size:8.5px;font-weight:400;color:#2e2e2e;transform:scaleX(0.9300);transform-origin:right;">-</div>
<div class="t" style="left:446.20px;top:225px;font-size:8.5px;font-weight:400;color:#2e2e2e;word-spacing:1.2px;">Daily apt download activities</div>
<svg class="a" style="left:11px;top:236.64px" width="14" height="15" viewBox="11 0 14 15"><path fill-rule="evenodd" fill="#2a2a2a" stroke="#2a2a2a" stroke-width="0.35" stroke-linejoin="round" d="M14.70,4.73 L14.88,4.06 L16.12,4.06 L16.30,4.73 L16.68,4.88 L17.28,4.54 L18.16,5.42 L17.82,6.02 L17.97,6.40 L18.64,6.58 L18.64,7.82 L17.97,8.00 L17.82,8.38 L18.16,8.98 L17.28,9.86 L16.68,9.52 L16.30,9.67 L16.12,10.34 L14.88,10.34 L14.70,9.67 L14.32,9.52 L13.72,9.86 L12.84,8.98 L13.18,8.38 L13.03,8.00 L12.36,7.82 L12.36,6.58 L13.03,6.40 L13.18,6.02 L12.84,5.42 L13.72,4.54 L14.32,4.88 Z M16.60,7.20 A1.1,1.1 0 1,0 14.40,7.20 A1.1,1.1 0 1,0 16.60,7.20 Z"/><circle cx="20.8" cy="4.8" r="1.2" fill="none" stroke="#2a2a2a" stroke-width="1.05"/></svg>
<div class="t" style="left:24.10px;top:240px;font-size:8.5px;font-weight:400;color:#2e2e2e;">apt-daily-upgrade.service</div>
<div class="t" style="left:151.10px;top:240px;font-size:8.5px;font-weight:400;color:#2e2e2e;">Static</div>
<div class="t" style="left:-72.60px;width:300px;text-align:right;top:240px;font-size:8.5px;font-weight:400;color:#2e2e2e;transform:scaleX(0.9300);transform-origin:right;">0</div>
<div class="t" style="left:232.20px;top:240px;font-size:8.5px;font-weight:400;color:#2e2e2e;">Inactive</div>
<div class="t" style="left:287.30px;top:240px;font-size:8.5px;font-weight:400;color:#2e2e2e;">Loaded</div>
<div class="t" style="left:337.60px;top:240px;font-size:8.5px;font-weight:400;color:#2e2e2e;">Dead</div>
<div class="t" style="left:140.60px;width:300px;text-align:right;top:240px;font-size:8.5px;font-weight:400;color:#2e2e2e;transform:scaleX(0.9300);transform-origin:right;">-</div>
<div class="t" style="left:446.20px;top:240px;font-size:8.5px;font-weight:400;color:#2e2e2e;word-spacing:1.2px;">Daily apt upgrade and clean activities</div>
<div class="a" style="left:10.90px;top:251.40px;width:718.70px;height:14.50px;background:#0a5cf4"></div>
<svg class="a" style="left:11px;top:251.42px" width="14" height="15" viewBox="11 0 14 15"><path fill-rule="evenodd" fill="#fff" stroke="#fff" stroke-width="0.35" stroke-linejoin="round" d="M14.70,4.73 L14.88,4.06 L16.12,4.06 L16.30,4.73 L16.68,4.88 L17.28,4.54 L18.16,5.42 L17.82,6.02 L17.97,6.40 L18.64,6.58 L18.64,7.82 L17.97,8.00 L17.82,8.38 L18.16,8.98 L17.28,9.86 L16.68,9.52 L16.30,9.67 L16.12,10.34 L14.88,10.34 L14.70,9.67 L14.32,9.52 L13.72,9.86 L12.84,8.98 L13.18,8.38 L13.03,8.00 L12.36,7.82 L12.36,6.58 L13.03,6.40 L13.18,6.02 L12.84,5.42 L13.72,4.54 L14.32,4.88 Z M16.60,7.20 A1.1,1.1 0 1,0 14.40,7.20 A1.1,1.1 0 1,0 16.60,7.20 Z"/><circle cx="20.8" cy="4.8" r="1.2" fill="none" stroke="#fff" stroke-width="1.05"/></svg>
<div class="t" style="left:24.10px;top:255px;font-size:8.5px;font-weight:400;color:#fff;">atd.service</div>
<div class="t" style="left:151.10px;top:255px;font-size:8.5px;font-weight:400;color:#fff;">Enabled</div>
<div class="t" style="left:-72.60px;width:300px;text-align:right;top:255px;font-size:8.5px;font-weight:400;color:#fff;transform:scaleX(0.9300);transform-origin:right;">2283</div>
<div class="t" style="left:232.20px;top:255px;font-size:8.5px;font-weight:400;color:#fff;">Active</div>
<div class="t" style="left:287.30px;top:255px;font-size:8.5px;font-weight:400;color:#fff;">Loaded</div>
<div class="t" style="left:337.60px;top:255px;font-size:8.5px;font-weight:400;color:#fff;">Running</div>
<div class="t" style="left:140.60px;width:300px;text-align:right;top:255px;font-size:8.5px;font-weight:400;color:#fff;transform:scaleX(0.9300);transform-origin:right;">300.0 KiB</div>
<div class="t" style="left:446.20px;top:255px;font-size:8.5px;font-weight:400;color:#fff;word-spacing:1.2px;">Deferred execution scheduler</div>
<svg class="a" style="left:11px;top:266.20px" width="14" height="15" viewBox="11 0 14 15"><path fill-rule="evenodd" fill="#2a2a2a" stroke="#2a2a2a" stroke-width="0.35" stroke-linejoin="round" d="M14.70,4.73 L14.88,4.06 L16.12,4.06 L16.30,4.73 L16.68,4.88 L17.28,4.54 L18.16,5.42 L17.82,6.02 L17.97,6.40 L18.64,6.58 L18.64,7.82 L17.97,8.00 L17.82,8.38 L18.16,8.98 L17.28,9.86 L16.68,9.52 L16.30,9.67 L16.12,10.34 L14.88,10.34 L14.70,9.67 L14.32,9.52 L13.72,9.86 L12.84,8.98 L13.18,8.38 L13.03,8.00 L12.36,7.82 L12.36,6.58 L13.03,6.40 L13.18,6.02 L12.84,5.42 L13.72,4.54 L14.32,4.88 Z M16.60,7.20 A1.1,1.1 0 1,0 14.40,7.20 A1.1,1.1 0 1,0 16.60,7.20 Z"/><circle cx="20.8" cy="4.8" r="1.2" fill="none" stroke="#2a2a2a" stroke-width="1.05"/></svg>
<div class="t" style="left:24.10px;top:270px;font-size:8.5px;font-weight:400;color:#2e2e2e;">avahi-daemon.service</div>
<div class="t" style="left:151.10px;top:270px;font-size:8.5px;font-weight:400;color:#2e2e2e;">Enabled</div>
<div class="t" style="left:-72.60px;width:300px;text-align:right;top:270px;font-size:8.5px;font-weight:400;color:#2e2e2e;transform:scaleX(0.9300);transform-origin:right;">2195</div>
<div class="t" style="left:232.20px;top:270px;font-size:8.5px;font-weight:400;color:#2e2e2e;">Active</div>
<div class="t" style="left:287.30px;top:270px;font-size:8.5px;font-weight:400;color:#2e2e2e;">Loaded</div>
<div class="t" style="left:337.60px;top:270px;font-size:8.5px;font-weight:400;color:#2e2e2e;">Running</div>
<div class="t" style="left:140.60px;width:300px;text-align:right;top:270px;font-size:8.5px;font-weight:400;color:#2e2e2e;transform:scaleX(0.9300);transform-origin:right;">1.7 MiB</div>
<div class="t" style="left:446.20px;top:270px;font-size:8.5px;font-weight:400;color:#2e2e2e;word-spacing:1.2px;">Avahi mdns/dns-sd stack</div>
<svg class="a" style="left:11px;top:280.98px" width="14" height="15" viewBox="11 0 14 15"><path fill-rule="evenodd" fill="#2a2a2a" stroke="#2a2a2a" stroke-width="0.35" stroke-linejoin="round" d="M14.70,4.73 L14.88,4.06 L16.12,4.06 L16.30,4.73 L16.68,4.88 L17.28,4.54 L18.16,5.42 L17.82,6.02 L17.97,6.40 L18.64,6.58 L18.64,7.82 L17.97,8.00 L17.82,8.38 L18.16,8.98 L17.28,9.86 L16.68,9.52 L16.30,9.67 L16.12,10.34 L14.88,10.34 L14.70,9.67 L14.32,9.52 L13.72,9.86 L12.84,8.98 L13.18,8.38 L13.03,8.00 L12.36,7.82 L12.36,6.58 L13.03,6.40 L13.18,6.02 L12.84,5.42 L13.72,4.54 L14.32,4.88 Z M16.60,7.20 A1.1,1.1 0 1,0 14.40,7.20 A1.1,1.1 0 1,0 16.60,7.20 Z"/><circle cx="20.8" cy="4.8" r="1.2" fill="none" stroke="#2a2a2a" stroke-width="1.05"/></svg>
<div class="t" style="left:24.10px;top:284px;font-size:8.5px;font-weight:400;color:#2e2e2e;">binfmt-support.service</div>
<div class="t" style="left:151.10px;top:284px;font-size:8.5px;font-weight:400;color:#2e2e2e;">Enabled</div>
<div class="t" style="left:-72.60px;width:300px;text-align:right;top:284px;font-size:8.5px;font-weight:400;color:#2e2e2e;transform:scaleX(0.9300);transform-origin:right;">0</div>
<div class="t" style="left:232.20px;top:284px;font-size:8.5px;font-weight:400;color:#2e2e2e;">Active</div>
<div class="t" style="left:287.30px;top:284px;font-size:8.5px;font-weight:400;color:#2e2e2e;">Loaded</div>
<div class="t" style="left:337.60px;top:284px;font-size:8.5px;font-weight:400;color:#2e2e2e;">Exited</div>
<div class="t" style="left:140.60px;width:300px;text-align:right;top:284px;font-size:8.5px;font-weight:400;color:#2e2e2e;transform:scaleX(0.9300);transform-origin:right;">0 B</div>
<div class="t" style="left:446.20px;top:284px;font-size:8.5px;font-weight:400;color:#2e2e2e;word-spacing:1.2px;">Enable support for additional executable binary formats</div>
<svg class="a" style="left:11px;top:295.76px" width="14" height="15" viewBox="11 0 14 15"><path fill-rule="evenodd" fill="#2a2a2a" stroke="#2a2a2a" stroke-width="0.35" stroke-linejoin="round" d="M14.70,4.73 L14.88,4.06 L16.12,4.06 L16.30,4.73 L16.68,4.88 L17.28,4.54 L18.16,5.42 L17.82,6.02 L17.97,6.40 L18.64,6.58 L18.64,7.82 L17.97,8.00 L17.82,8.38 L18.16,8.98 L17.28,9.86 L16.68,9.52 L16.30,9.67 L16.12,10.34 L14.88,10.34 L14.70,9.67 L14.32,9.52 L13.72,9.86 L12.84,8.98 L13.18,8.38 L13.03,8.00 L12.36,7.82 L12.36,6.58 L13.03,6.40 L13.18,6.02 L12.84,5.42 L13.72,4.54 L14.32,4.88 Z M16.60,7.20 A1.1,1.1 0 1,0 14.40,7.20 A1.1,1.1 0 1,0 16.60,7.20 Z"/><circle cx="20.8" cy="4.8" r="1.2" fill="none" stroke="#2a2a2a" stroke-width="1.05"/></svg>
<div class="t" style="left:24.10px;top:299px;font-size:8.5px;font-weight:400;color:#2e2e2e;">blk-availability.service</div>
<div class="t" style="left:151.10px;top:299px;font-size:8.5px;font-weight:400;color:#2e2e2e;">Enabled</div>
<div class="t" style="left:-72.60px;width:300px;text-align:right;top:299px;font-size:8.5px;font-weight:400;color:#2e2e2e;transform:scaleX(0.9300);transform-origin:right;">0</div>
<div class="t" style="left:232.20px;top:299px;font-size:8.5px;font-weight:400;color:#2e2e2e;">Active</div>
<div class="t" style="left:287.30px;top:299px;font-size:8.5px;font-weight:400;color:#2e2e2e;">Loaded</div>
<div class="t" style="left:337.60px;top:299px;font-size:8.5px;font-weight:400;color:#2e2e2e;">Exited</div>
<div class="t" style="left:140.60px;width:300px;text-align:right;top:299px;font-size:8.5px;font-weight:400;color:#2e2e2e;transform:scaleX(0.9300);transform-origin:right;">0 B</div>
<div class="t" style="left:446.20px;top:299px;font-size:8.5px;font-weight:400;color:#2e2e2e;word-spacing:1.2px;">Availability of block devices</div>
<svg class="a" style="left:11px;top:310.54px" width="14" height="15" viewBox="11 0 14 15"><path fill-rule="evenodd" fill="#2a2a2a" stroke="#2a2a2a" stroke-width="0.35" stroke-linejoin="round" d="M14.70,4.73 L14.88,4.06 L16.12,4.06 L16.30,4.73 L16.68,4.88 L17.28,4.54 L18.16,5.42 L17.82,6.02 L17.97,6.40 L18.64,6.58 L18.64,7.82 L17.97,8.00 L17.82,8.38 L18.16,8.98 L17.28,9.86 L16.68,9.52 L16.30,9.67 L16.12,10.34 L14.88,10.34 L14.70,9.67 L14.32,9.52 L13.72,9.86 L12.84,8.98 L13.18,8.38 L13.03,8.00 L12.36,7.82 L12.36,6.58 L13.03,6.40 L13.18,6.02 L12.84,5.42 L13.72,4.54 L14.32,4.88 Z M16.60,7.20 A1.1,1.1 0 1,0 14.40,7.20 A1.1,1.1 0 1,0 16.60,7.20 Z"/><circle cx="20.8" cy="4.8" r="1.2" fill="none" stroke="#2a2a2a" stroke-width="1.05"/></svg>
<div class="t" style="left:24.10px;top:314px;font-size:8.5px;font-weight:400;color:#2e2e2e;">bluetooth.service</div>
<div class="t" style="left:151.10px;top:314px;font-size:8.5px;font-weight:400;color:#2e2e2e;">Enabled</div>
<div class="t" style="left:-72.60px;width:300px;text-align:right;top:314px;font-size:8.5px;font-weight:400;color:#2e2e2e;transform:scaleX(0.9300);transform-origin:right;">2198</div>
<div class="t" style="left:232.20px;top:314px;font-size:8.5px;font-weight:400;color:#2e2e2e;">Active</div>
<div class="t" style="left:287.30px;top:314px;font-size:8.5px;font-weight:400;color:#2e2e2e;">Loaded</div>
<div class="t" style="left:337.60px;top:314px;font-size:8.5px;font-weight:400;color:#2e2e2e;">Running</div>
<div class="t" style="left:140.60px;width:300px;text-align:right;top:314px;font-size:8.5px;font-weight:400;color:#2e2e2e;transform:scaleX(0.9300);transform-origin:right;">3.0 MiB</div>
<div class="t" style="left:446.20px;top:314px;font-size:8.5px;font-weight:400;color:#2e2e2e;word-spacing:1.2px;">Bluetooth service</div>
<svg class="a" style="left:11px;top:325.32px" width="14" height="15" viewBox="11 0 14 15"><path fill-rule="evenodd" fill="#2a2a2a" stroke="#2a2a2a" stroke-width="0.35" stroke-linejoin="round" d="M14.70,4.73 L14.88,4.06 L16.12,4.06 L16.30,4.73 L16.68,4.88 L17.28,4.54 L18.16,5.42 L17.82,6.02 L17.97,6.40 L18.64,6.58 L18.64,7.82 L17.97,8.00 L17.82,8.38 L18.16,8.98 L17.28,9.86 L16.68,9.52 L16.30,9.67 L16.12,10.34 L14.88,10.34 L14.70,9.67 L14.32,9.52 L13.72,9.86 L12.84,8.98 L13.18,8.38 L13.03,8.00 L12.36,7.82 L12.36,6.58 L13.03,6.40 L13.18,6.02 L12.84,5.42 L13.72,4.54 L14.32,4.88 Z M16.60,7.20 A1.1,1.1 0 1,0 14.40,7.20 A1.1,1.1 0 1,0 16.60,7.20 Z"/><circle cx="20.8" cy="4.8" r="1.2" fill="none" stroke="#2a2a2a" stroke-width="1.05"/></svg>
<div class="t" style="left:24.10px;top:329px;font-size:8.5px;font-weight:400;color:#2e2e2e;">bolt.service</div>
<div class="t" style="left:151.10px;top:329px;font-size:8.5px;font-weight:400;color:#2e2e2e;">Static</div>
<div class="t" style="left:-72.60px;width:300px;text-align:right;top:329px;font-size:8.5px;font-weight:400;color:#2e2e2e;transform:scaleX(0.9300);transform-origin:right;">0</div>
<div class="t" style="left:232.20px;top:329px;font-size:8.5px;font-weight:400;color:#2e2e2e;">Inactive</div>
<div class="t" style="left:287.30px;top:329px;font-size:8.5px;font-weight:400;color:#2e2e2e;">Loaded</div>
<div class="t" style="left:337.60px;top:329px;font-size:8.5px;font-weight:400;color:#2e2e2e;">Dead</div>
<div class="t" style="left:140.60px;width:300px;text-align:right;top:329px;font-size:8.5px;font-weight:400;color:#2e2e2e;transform:scaleX(0.9300);transform-origin:right;">-</div>
<div class="t" style="left:446.20px;top:329px;font-size:8.5px;font-weight:400;color:#2e2e2e;word-spacing:1.2px;">Thunderbolt system service</div>
<svg class="a" style="left:11px;top:340.10px" width="14" height="15" viewBox="11 0 14 15"><path fill-rule="evenodd" fill="#2a2a2a" stroke="#2a2a2a" stroke-width="0.35" stroke-linejoin="round" d="M14.70,4.73 L14.88,4.06 L16.12,4.06 L16.30,4.73 L16.68,4.88 L17.28,4.54 L18.16,5.42 L17.82,6.02 L17.97,6.40 L18.64,6.58 L18.64,7.82 L17.97,8.00 L17.82,8.38 L18.16,8.98 L17.28,9.86 L16.68,9.52 L16.30,9.67 L16.12,10.34 L14.88,10.34 L14.70,9.67 L14.32,9.52 L13.72,9.86 L12.84,8.98 L13.18,8.38 L13.03,8.00 L12.36,7.82 L12.36,6.58 L13.03,6.40 L13.18,6.02 L12.84,5.42 L13.72,4.54 L14.32,4.88 Z M16.60,7.20 A1.1,1.1 0 1,0 14.40,7.20 A1.1,1.1 0 1,0 16.60,7.20 Z"/><circle cx="20.8" cy="4.8" r="1.2" fill="none" stroke="#2a2a2a" stroke-width="1.05"/></svg>
<div class="t" style="left:24.10px;top:343px;font-size:8.5px;font-weight:400;color:#2e2e2e;">brltty.service</div>
<div class="t" style="left:151.10px;top:343px;font-size:8.5px;font-weight:400;color:#2e2e2e;">Disabled</div>
<div class="t" style="left:-72.60px;width:300px;text-align:right;top:343px;font-size:8.5px;font-weight:400;color:#2e2e2e;transform:scaleX(0.9300);transform-origin:right;">0</div>
<div class="t" style="left:232.20px;top:343px;font-size:8.5px;font-weight:400;color:#2e2e2e;">Inactive</div>
<div class="t" style="left:287.30px;top:343px;font-size:8.5px;font-weight:400;color:#2e2e2e;">Loaded</div>
<div class="t" style="left:337.60px;top:343px;font-size:8.5px;font-weight:400;color:#2e2e2e;">Dead</div>
<div class="t" style="left:140.60px;width:300px;text-align:right;top:343px;font-size:8.5px;font-weight:400;color:#2e2e2e;transform:scaleX(0.9300);transform-origin:right;">-</div>
<div class="t" style="left:446.20px;top:343px;font-size:8.5px;font-weight:400;color:#2e2e2e;word-spacing:1.2px;">Braille device support</div>
<svg class="a" style="left:11px;top:354.88px" width="14" height="15" viewBox="11 0 14 15"><path fill-rule="evenodd" fill="#2a2a2a" stroke="#2a2a2a" stroke-width="0.35" stroke-linejoin="round" d="M14.70,4.73 L14.88,4.06 L16.12,4.06 L16.30,4.73 L16.68,4.88 L17.28,4.54 L18.16,5.42 L17.82,6.02 L17.97,6.40 L18.64,6.58 L18.64,7.82 L17.97,8.00 L17.82,8.38 L18.16,8.98 L17.28,9.86 L16.68,9.52 L16.30,9.67 L16.12,10.34 L14.88,10.34 L14.70,9.67 L14.32,9.52 L13.72,9.86 L12.84,8.98 L13.18,8.38 L13.03,8.00 L12.36,7.82 L12.36,6.58 L13.03,6.40 L13.18,6.02 L12.84,5.42 L13.72,4.54 L14.32,4.88 Z M16.60,7.20 A1.1,1.1 0 1,0 14.40,7.20 A1.1,1.1 0 1,0 16.60,7.20 Z"/><circle cx="20.8" cy="4.8" r="1.2" fill="none" stroke="#2a2a2a" stroke-width="1.05"/></svg>
<div class="t" style="left:24.10px;top:358px;font-size:8.5px;font-weight:400;color:#2e2e2e;">brltty-udev.service</div>
<div class="t" style="left:151.10px;top:358px;font-size:8.5px;font-weight:400;color:#2e2e2e;">Static</div>
<div class="t" style="left:-72.60px;width:300px;text-align:right;top:358px;font-size:8.5px;font-weight:400;color:#2e2e2e;transform:scaleX(0.9300);transform-origin:right;">0</div>
<div class="t" style="left:232.20px;top:358px;font-size:8.5px;font-weight:400;color:#2e2e2e;">Inactive</div>
<div class="t" style="left:287.30px;top:358px;font-size:8.5px;font-weight:400;color:#2e2e2e;">Loaded</div>
<div class="t" style="left:337.60px;top:358px;font-size:8.5px;font-weight:400;color:#2e2e2e;">Dead</div>
<div class="t" style="left:140.60px;width:300px;text-align:right;top:358px;font-size:8.5px;font-weight:400;color:#2e2e2e;transform:scaleX(0.9300);transform-origin:right;">-</div>
<div class="t" style="left:446.20px;top:358px;font-size:8.5px;font-weight:400;color:#2e2e2e;word-spacing:1.2px;">Braille device support</div>
<svg class="a" style="left:11px;top:369.66px" width="14" height="15" viewBox="11 0 14 15"><path fill-rule="evenodd" fill="#2a2a2a" stroke="#2a2a2a" stroke-width="0.35" stroke-linejoin="round" d="M14.70,4.73 L14.88,4.06 L16.12,4.06 L16.30,4.73 L16.68,4.88 L17.28,4.54 L18.16,5.42 L17.82,6.02 L17.97,6.40 L18.64,6.58 L18.64,7.82 L17.97,8.00 L17.82,8.38 L18.16,8.98 L17.28,9.86 L16.68,9.52 L16.30,9.67 L16.12,10.34 L14.88,10.34 L14.70,9.67 L14.32,9.52 L13.72,9.86 L12.84,8.98 L13.18,8.38 L13.03,8.00 L12.36,7.82 L12.36,6.58 L13.03,6.40 L13.18,6.02 L12.84,5.42 L13.72,4.54 L14.32,4.88 Z M16.60,7.20 A1.1,1.1 0 1,0 14.40,7.20 A1.1,1.1 0 1,0 16.60,7.20 Z"/><circle cx="20.8" cy="4.8" r="1.2" fill="none" stroke="#2a2a2a" stroke-width="1.05"/></svg>
<div class="t" style="left:24.10px;top:373px;font-size:8.5px;font-weight:400;color:#2e2e2e;">cgroupfs-mount.service</div>
<div class="t" style="left:151.10px;top:373px;font-size:8.5px;font-weight:400;color:#2e2e2e;">Masked</div>
<div class="t" style="left:-72.60px;width:300px;text-align:right;top:373px;font-size:8.5px;font-weight:400;color:#2e2e2e;transform:scaleX(0.9300);transform-origin:right;">0</div>
<div class="t" style="left:232.20px;top:373px;font-size:8.5px;font-weight:400;color:#2e2e2e;">Inactive</div>
<div class="t" style="left:287.30px;top:373px;font-size:8.5px;font-weight:400;color:#2e2e2e;">Masked</div>
<div class="t" style="left:337.60px;top:373px;font-size:8.5px;font-weight:400;color:#2e2e2e;">Dead</div>
<div class="t" style="left:140.60px;width:300px;text-align:right;top:373px;font-size:8.5px;font-weight:400;color:#2e2e2e;transform:scaleX(0.9300);transform-origin:right;">-</div>
<div class="t" style="left:446.20px;top:373px;font-size:8.5px;font-weight:400;color:#2e2e2e;word-spacing:1.2px;">Cgroupfs-mount.service</div>
<svg class="a" style="left:11px;top:384.44px" width="14" height="15" viewBox="11 0 14 15"><path fill-rule="evenodd" fill="#2a2a2a" stroke="#2a2a2a" stroke-width="0.35" stroke-linejoin="round" d="M14.70,4.73 L14.88,4.06 L16.12,4.06 L16.30,4.73 L16.68,4.88 L17.28,4.54 L18.16,5.42 L17.82,6.02 L17.97,6.40 L18.64,6.58 L18.64,7.82 L17.97,8.00 L17.82,8.38 L18.16,8.98 L17.28,9.86 L16.68,9.52 L16.30,9.67 L16.12,10.34 L14.88,10.34 L14.70,9.67 L14.32,9.52 L13.72,9.86 L12.84,8.98 L13.18,8.38 L13.03,8.00 L12.36,7.82 L12.36,6.58 L13.03,6.40 L13.18,6.02 L12.84,5.42 L13.72,4.54 L14.32,4.88 Z M16.60,7.20 A1.1,1.1 0 1,0 14.40,7.20 A1.1,1.1 0 1,0 16.60,7.20 Z"/><circle cx="20.8" cy="4.8" r="1.2" fill="none" stroke="#2a2a2a" stroke-width="1.05"/></svg>
<div class="t" style="left:24.10px;top:388px;font-size:8.5px;font-weight:400;color:#2e2e2e;">colord.service</div>
<div class="t" style="left:151.10px;top:388px;font-size:8.5px;font-weight:400;color:#2e2e2e;">Static</div>
<div class="t" style="left:-72.60px;width:300px;text-align:right;top:388px;font-size:8.5px;font-weight:400;color:#2e2e2e;transform:scaleX(0.9300);transform-origin:right;">2493</div>
<div class="t" style="left:232.20px;top:388px;font-size:8.5px;font-weight:400;color:#2e2e2e;">Active</div>
<div class="t" style="left:287.30px;top:388px;font-size:8.5px;font-weight:400;color:#2e2e2e;">Loaded</div>
<div class="t" style="left:337.60px;top:388px;font-size:8.5px;font-weight:400;color:#2e2e2e;">Running</div>
<div class="t" style="left:140.60px;width:300px;text-align:right;top:388px;font-size:8.5px;font-weight:400;color:#2e2e2e;transform:scaleX(0.9300);transform-origin:right;">14.1 MiB</div>
<div class="t" style="left:446.20px;top:388px;font-size:8.5px;font-weight:400;color:#2e2e2e;word-spacing:1.2px;">Manage, install and generate color profiles</div>
<svg class="a" style="left:11px;top:399.22px" width="14" height="15" viewBox="11 0 14 15"><path fill-rule="evenodd" fill="#2a2a2a" stroke="#2a2a2a" stroke-width="0.35" stroke-linejoin="round" d="M14.70,4.73 L14.88,4.06 L16.12,4.06 L16.30,4.73 L16.68,4.88 L17.28,4.54 L18.16,5.42 L17.82,6.02 L17.97,6.40 L18.64,6.58 L18.64,7.82 L17.97,8.00 L17.82,8.38 L18.16,8.98 L17.28,9.86 L16.68,9.52 L16.30,9.67 L16.12,10.34 L14.88,10.34 L14.70,9.67 L14.32,9.52 L13.72,9.86 L12.84,8.98 L13.18,8.38 L13.03,8.00 L12.36,7.82 L12.36,6.58 L13.03,6.40 L13.18,6.02 L12.84,5.42 L13.72,4.54 L14.32,4.88 Z M16.60,7.20 A1.1,1.1 0 1,0 14.40,7.20 A1.1,1.1 0 1,0 16.60,7.20 Z"/><circle cx="20.8" cy="4.8" r="1.2" fill="none" stroke="#2a2a2a" stroke-width="1.05"/></svg>
<div class="t" style="left:24.10px;top:403px;font-size:8.5px;font-weight:400;color:#2e2e2e;transform:scaleX(0.9722);transform-origin:left;">com.system76.Scheduler.service</div>
<div class="t" style="left:151.10px;top:403px;font-size:8.5px;font-weight:400;color:#2e2e2e;">Enabled</div>
<div class="t" style="left:-72.60px;width:300px;text-align:right;top:403px;font-size:8.5px;font-weight:400;color:#2e2e2e;transform:scaleX(0.9300);transform-origin:right;">2202</div>
<div class="t" style="left:232.20px;top:403px;font-size:8.5px;font-weight:400;color:#2e2e2e;">Active</div>
<div class="t" style="left:287.30px;top:403px;font-size:8.5px;font-weight:400;color:#2e2e2e;">Loaded</div>
<div class="t" style="left:337.60px;top:403px;font-size:8.5px;font-weight:400;color:#2e2e2e;">Running</div>
<div class="t" style="left:140.60px;width:300px;text-align:right;top:403px;font-size:8.5px;font-weight:400;color:#2e2e2e;transform:scaleX(0.9300);transform-origin:right;">7.5 MiB</div>
<div class="t" style="left:446.20px;top:403px;font-size:8.5px;font-weight:400;color:#2e2e2e;word-spacing:1.2px;">Automatically configure cpu scheduler for responsiveness on ac</div>
<svg class="a" style="left:11px;top:414.00px" width="14" height="15" viewBox="11 0 14 15"><path fill-rule="evenodd" fill="#2a2a2a" stroke="#2a2a2a" stroke-width="0.35" stroke-linejoin="round" d="M14.70,4.73 L14.88,4.06 L16.12,4.06 L16.30,4.73 L16.68,4.88 L17.28,4.54 L18.16,5.42 L17.82,6.02 L17.97,6.40 L18.64,6.58 L18.64,7.82 L17.97,8.00 L17.82,8.38 L18.16,8.98 L17.28,9.86 L16.68,9.52 L16.30,9.67 L16.12,10.34 L14.88,10.34 L14.70,9.67 L14.32,9.52 L13.72,9.86 L12.84,8.98 L13.18,8.38 L13.03,8.00 L12.36,7.82 L12.36,6.58 L13.03,6.40 L13.18,6.02 L12.84,5.42 L13.72,4.54 L14.32,4.88 Z M16.60,7.20 A1.1,1.1 0 1,0 14.40,7.20 A1.1,1.1 0 1,0 16.60,7.20 Z"/><circle cx="20.8" cy="4.8" r="1.2" fill="none" stroke="#2a2a2a" stroke-width="1.05"/></svg>
<div class="t" style="left:24.10px;top:417px;font-size:8.5px;font-weight:400;color:#2e2e2e;">console-getty.service</div>
<div class="t" style="left:151.10px;top:417px;font-size:8.5px;font-weight:400;color:#2e2e2e;">Disabled</div>
<div class="t" style="left:-72.60px;width:300px;text-align:right;top:417px;font-size:8.5px;font-weight:400;color:#2e2e2e;transform:scaleX(0.9300);transform-origin:right;">0</div>
<div class="t" style="left:232.20px;top:417px;font-size:8.5px;font-weight:400;color:#2e2e2e;">Inactive</div>
<div class="t" style="left:287.30px;top:417px;font-size:8.5px;font-weight:400;color:#2e2e2e;">Loaded</div>
<div class="t" style="left:337.60px;top:417px;font-size:8.5px;font-weight:400;color:#2e2e2e;">Dead</div>
<div class="t" style="left:140.60px;width:300px;text-align:right;top:417px;font-size:8.5px;font-weight:400;color:#2e2e2e;transform:scaleX(0.9300);transform-origin:right;">-</div>
<div class="t" style="left:446.20px;top:417px;font-size:8.5px;font-weight:400;color:#2e2e2e;word-spacing:1.2px;">Console getty</div>
<svg class="a" style="left:11px;top:428.78px" width="14" height="15" viewBox="11 0 14 15"><path fill-rule="evenodd" fill="#2a2a2a" stroke="#2a2a2a" stroke-width="0.35" stroke-linejoin="round" d="M14.70,4.73 L14.88,4.06 L16.12,4.06 L16.30,4.73 L16.68,4.88 L17.28,4.54 L18.16,5.42 L17.82,6.02 L17.97,6.40 L18.64,6.58 L18.64,7.82 L17.97,8.00 L17.82,8.38 L18.16,8.98 L17.28,9.86 L16.68,9.52 L16.30,9.67 L16.12,10.34 L14.88,10.34 L14.70,9.67 L14.32,9.52 L13.72,9.86 L12.84,8.98 L13.18,8.38 L13.03,8.00 L12.36,7.82 L12.36,6.58 L13.03,6.40 L13.18,6.02 L12.84,5.42 L13.72,4.54 L14.32,4.88 Z M16.60,7.20 A1.1,1.1 0 1,0 14.40,7.20 A1.1,1.1 0 1,0 16.60,7.20 Z"/><circle cx="20.8" cy="4.8" r="1.2" fill="none" stroke="#2a2a2a" stroke-width="1.05"/></svg>
<div class="t" style="left:24.10px;top:432px;font-size:8.5px;font-weight:400;color:#2e2e2e;">console-setup.service</div>
<div class="t" style="left:151.10px;top:432px;font-size:8.5px;font-weight:400;color:#2e2e2e;">Enabled</div>
<div class="t" style="left:-72.60px;width:300px;text-align:right;top:432px;font-size:8.5px;font-weight:400;color:#2e2e2e;transform:scaleX(0.9300);transform-origin:right;">0</div>
<div class="t" style="left:232.20px;top:432px;font-size:8.5px;font-weight:400;color:#2e2e2e;">Active</div>
<div class="t" style="left:287.30px;top:432px;font-size:8.5px;font-weight:400;color:#2e2e2e;">Loaded</div>
<div class="t" style="left:337.60px;top:432px;font-size:8.5px;font-weight:400;color:#2e2e2e;">Exited</div>
<div class="t" style="left:140.60px;width:300px;text-align:right;top:432px;font-size:8.5px;font-weight:400;color:#2e2e2e;transform:scaleX(0.9300);transform-origin:right;">0 B</div>
<div class="t" style="left:446.20px;top:432px;font-size:8.5px;font-weight:400;color:#2e2e2e;word-spacing:1.2px;">Set console font and keymap</div>
<svg class="a" style="left:11px;top:443.56px" width="14" height="15" viewBox="11 0 14 15"><path fill-rule="evenodd" fill="#2a2a2a" stroke="#2a2a2a" stroke-width="0.35" stroke-linejoin="round" d="M14.70,4.73 L14.88,4.06 L16.12,4.06 L16.30,4.73 L16.68,4.88 L17.28,4.54 L18.16,5.42 L17.82,6.02 L17.97,6.40 L18.64,6.58 L18.64,7.82 L17.97,8.00 L17.82,8.38 L18.16,8.98 L17.28,9.86 L16.68,9.52 L16.30,9.67 L16.12,10.34 L14.88,10.34 L14.70,9.67 L14.32,9.52 L13.72,9.86 L12.84,8.98 L13.18,8.38 L13.03,8.00 L12.36,7.82 L12.36,6.58 L13.03,6.40 L13.18,6.02 L12.84,5.42 L13.72,4.54 L14.32,4.88 Z M16.60,7.20 A1.1,1.1 0 1,0 14.40,7.20 A1.1,1.1 0 1,0 16.60,7.20 Z"/><circle cx="20.8" cy="4.8" r="1.2" fill="none" stroke="#2a2a2a" stroke-width="1.05"/></svg>
<div class="t" style="left:24.10px;top:447px;font-size:8.5px;font-weight:400;color:#2e2e2e;">containerd.service</div>
<div class="t" style="left:151.10px;top:447px;font-size:8.5px;font-weight:400;color:#2e2e2e;">Enabled</div>
<div class="t" style="left:-72.60px;width:300px;text-align:right;top:447px;font-size:8.5px;font-weight:400;color:#2e2e2e;transform:scaleX(0.9300);transform-origin:right;">2392</div>
<div class="t" style="left:232.20px;top:447px;font-size:8.5px;font-weight:400;color:#2e2e2e;">Active</div>
<div class="t" style="left:287.30px;top:447px;font-size:8.5px;font-weight:400;color:#2e2e2e;">Loaded</div>
<div class="t" style="left:337.60px;top:447px;font-size:8.5px;font-weight:400;color:#2e2e2e;">Running</div>
<div class="t" style="left:140.60px;width:300px;text-align:right;top:447px;font-size:8.5px;font-weight:400;color:#2e2e2e;transform:scaleX(0.9300);transform-origin:right;">28.8 MiB</div>
<div class="t" style="left:446.20px;top:447px;font-size:8.5px;font-weight:400;color:#2e2e2e;word-spacing:1.2px;">Containerd container runtime</div>
<svg class="a" style="left:11px;top:458.34px" width="14" height="15" viewBox="11 0 14 15"><path fill-rule="evenodd" fill="#2a2a2a" stroke="#2a2a2a" stroke-width="0.35" stroke-linejoin="round" d="M14.70,4.73 L14.88,4.06 L16.12,4.06 L16.30,4.73 L16.68,4.88 L17.28,4.54 L18.16,5.42 L17.82,6.02 L17.97,6.40 L18.64,6.58 L18.64,7.82 L17.97,8.00 L17.82,8.38 L18.16,8.98 L17.28,9.86 L16.68,9.52 L16.30,9.67 L16.12,10.34 L14.88,10.34 L14.70,9.67 L14.32,9.52 L13.72,9.86 L12.84,8.98 L13.18,8.38 L13.03,8.00 L12.36,7.82 L12.36,6.58 L13.03,6.40 L13.18,6.02 L12.84,5.42 L13.72,4.54 L14.32,4.88 Z M16.60,7.20 A1.1,1.1 0 1,0 14.40,7.20 A1.1,1.1 0 1,0 16.60,7.20 Z"/><circle cx="20.8" cy="4.8" r="1.2" fill="none" stroke="#2a2a2a" stroke-width="1.05"/></svg>
<div class="t" style="left:24.10px;top:462px;font-size:8.5px;font-weight:400;color:#2e2e2e;">cron.service</div>
<div class="t" style="left:151.10px;top:462px;font-size:8.5px;font-weight:400;color:#2e2e2e;">Enabled</div>
<div class="t" style="left:-72.60px;width:300px;text-align:right;top:462px;font-size:8.5px;font-weight:400;color:#2e2e2e;transform:scaleX(0.9300);transform-origin:right;">2210</div>
<div class="t" style="left:232.20px;top:462px;font-size:8.5px;font-weight:400;color:#2e2e2e;">Active</div>
<div class="t" style="left:287.30px;top:462px;font-size:8.5px;font-weight:400;color:#2e2e2e;">Loaded</div>
<div class="t" style="left:337.60px;top:462px;font-size:8.5px;font-weight:400;color:#2e2e2e;">Running</div>
<div class="t" style="left:140.60px;width:300px;text-align:right;top:462px;font-size:8.5px;font-weight:400;color:#2e2e2e;transform:scaleX(0.9300);transform-origin:right;">58.2 MiB</div>
<div class="t" style="left:446.20px;top:462px;font-size:8.5px;font-weight:400;color:#2e2e2e;word-spacing:1.2px;">Regular background program processing daemon</div>
<svg class="a" style="left:11px;top:473.12px" width="14" height="15" viewBox="11 0 14 15"><path fill-rule="evenodd" fill="#2a2a2a" stroke="#2a2a2a" stroke-width="0.35" stroke-linejoin="round" d="M14.70,4.73 L14.88,4.06 L16.12,4.06 L16.30,4.73 L16.68,4.88 L17.28,4.54 L18.16,5.42 L17.82,6.02 L17.97,6.40 L18.64,6.58 L18.64,7.82 L17.97,8.00 L17.82,8.38 L18.16,8.98 L17.28,9.86 L16.68,9.52 L16.30,9.67 L16.12,10.34 L14.88,10.34 L14.70,9.67 L14.32,9.52 L13.72,9.86 L12.84,8.98 L13.18,8.38 L13.03,8.00 L12.36,7.82 L12.36,6.58 L13.03,6.40 L13.18,6.02 L12.84,5.42 L13.72,4.54 L14.32,4.88 Z M16.60,7.20 A1.1,1.1 0 1,0 14.40,7.20 A1.1,1.1 0 1,0 16.60,7.20 Z"/><circle cx="20.8" cy="4.8" r="1.2" fill="none" stroke="#2a2a2a" stroke-width="1.05"/></svg>
<div class="t" style="left:24.10px;top:477px;font-size:8.5px;font-weight:400;color:#2e2e2e;">cryptdisks-early.service</div>
<div class="t" style="left:151.10px;top:477px;font-size:8.5px;font-weight:400;color:#2e2e2e;">Masked</div>
<div class="t" style="left:-72.60px;width:300px;text-align:right;top:477px;font-size:8.5px;font-weight:400;color:#2e2e2e;transform:scaleX(0.9300);transform-origin:right;">0</div>
<div class="t" style="left:232.20px;top:477px;font-size:8.5px;font-weight:400;color:#2e2e2e;">Inactive</div>
<div class="t" style="left:287.30px;top:477px;font-size:8.5px;font-weight:400;color:#2e2e2e;">Masked</div>
<div class="t" style="left:337.60px;top:477px;font-size:8.5px;font-weight:400;color:#2e2e2e;">Dead</div>
<div class="t" style="left:140.60px;width:300px;text-align:right;top:477px;font-size:8.5px;font-weight:400;color:#2e2e2e;transform:scaleX(0.9300);transform-origin:right;">-</div>
<div class="t" style="left:446.20px;top:477px;font-size:8.5px;font-weight:400;color:#2e2e2e;word-spacing:1.2px;">Cryptdisks-early.service</div>
<svg class="a" style="left:11px;top:487.90px" width="14" height="15" viewBox="11 0 14 15"><path fill-rule="evenodd" fill="#2a2a2a" stroke="#2a2a2a" stroke-width="0.35" stroke-linejoin="round" d="M14.70,4.73 L14.88,4.06 L16.12,4.06 L16.30,4.73 L16.68,4.88 L17.28,4.54 L18.16,5.42 L17.82,6.02 L17.97,6.40 L18.64,6.58 L18.64,7.82 L17.97,8.00 L17.82,8.38 L18.16,8.98 L17.28,9.86 L16.68,9.52 L16.30,9.67 L16.12,10.34 L14.88,10.34 L14.70,9.67 L14.32,9.52 L13.72,9.86 L12.84,8.98 L13.18,8.38 L13.03,8.00 L12.36,7.82 L12.36,6.58 L13.03,6.40 L13.18,6.02 L12.84,5.42 L13.72,4.54 L14.32,4.88 Z M16.60,7.20 A1.1,1.1 0 1,0 14.40,7.20 A1.1,1.1 0 1,0 16.60,7.20 Z"/><circle cx="20.8" cy="4.8" r="1.2" fill="none" stroke="#2a2a2a" stroke-width="1.05"/></svg>
<div class="t" style="left:24.10px;top:491px;font-size:8.5px;font-weight:400;color:#2e2e2e;">cryptdisks.service</div>
<div class="t" style="left:151.10px;top:491px;font-size:8.5px;font-weight:400;color:#2e2e2e;">Masked</div>
<div class="t" style="left:-72.60px;width:300px;text-align:right;top:491px;font-size:8.5px;font-weight:400;color:#2e2e2e;transform:scaleX(0.9300);transform-origin:right;">0</div>
<div class="t" style="left:232.20px;top:491px;font-size:8.5px;font-weight:400;color:#2e2e2e;">Inactive</div>
<div class="t" style="left:287.30px;top:491px;font-size:8.5px;font-weight:400;color:#2e2e2e;">Masked</div>
<div class="t" style="left:337.60px;top:491px;font-size:8.5px;font-weight:400;color:#2e2e2e;">Dead</div>
<div class="t" style="left:140.60px;width:300px;text-align:right;top:491px;font-size:8.5px;font-weight:400;color:#2e2e2e;transform:scaleX(0.9300);transform-origin:right;">-</div>
<div class="t" style="left:446.20px;top:491px;font-size:8.5px;font-weight:400;color:#2e2e2e;word-spacing:1.2px;">Cryptdisks.service</div>
<svg class="a" style="left:11px;top:502.68px" width="14" height="15" viewBox="11 0 14 15"><path fill-rule="evenodd" fill="#2a2a2a" stroke="#2a2a2a" stroke-width="0.35" stroke-linejoin="round" d="M14.70,4.73 L14.88,4.06 L16.12,4.06 L16.30,4.73 L16.68,4.88 L17.28,4.54 L18.16,5.42 L17.82,6.02 L17.97,6.40 L18.64,6.58 L18.64,7.82 L17.97,8.00 L17.82,8.38 L18.16,8.98 L17.28,9.86 L16.68,9.52 L16.30,9.67 L16.12,10.34 L14.88,10.34 L14.70,9.67 L14.32,9.52 L13.72,9.86 L12.84,8.98 L13.18,8.38 L13.03,8.00 L12.36,7.82 L12.36,6.58 L13.03,6.40 L13.18,6.02 L12.84,5.42 L13.72,4.54 L14.32,4.88 Z M16.60,7.20 A1.1,1.1 0 1,0 14.40,7.20 A1.1,1.1 0 1,0 16.60,7.20 Z"/><circle cx="20.8" cy="4.8" r="1.2" fill="none" stroke="#2a2a2a" stroke-width="1.05"/></svg>
<div class="t" style="left:24.10px;top:506px;font-size:8.5px;font-weight:400;color:#2e2e2e;">cups-browsed.service</div>
<div class="t" style="left:151.10px;top:506px;font-size:8.5px;font-weight:400;color:#2e2e2e;">Enabled</div>
<div class="t" style="left:-72.60px;width:300px;text-align:right;top:506px;font-size:8.5px;font-weight:400;color:#2e2e2e;transform:scaleX(0.9300);transform-origin:right;">185890</div>
<div class="t" style="left:232.20px;top:506px;font-size:8.5px;font-weight:400;color:#2e2e2e;">Active</div>
<div class="t" style="left:287.30px;top:506px;font-size:8.5px;font-weight:400;color:#2e2e2e;">Loaded</div>
<div class="t" style="left:337.60px;top:506px;font-size:8.5px;font-weight:400;color:#2e2e2e;">Running</div>
<div class="t" style="left:140.60px;width:300px;text-align:right;top:506px;font-size:8.5px;font-weight:400;color:#2e2e2e;transform:scaleX(0.9300);transform-origin:right;">1.9 MiB</div>
<div class="t" style="left:446.20px;top:506px;font-size:8.5px;font-weight:400;color:#2e2e2e;word-spacing:1.2px;">Make remote cups printers available locally</div>
<svg class="a" style="left:11px;top:517.46px" width="14" height="15" viewBox="11 0 14 15"><path fill-rule="evenodd" fill="#2a2a2a" stroke="#2a2a2a" stroke-width="0.35" stroke-linejoin="round" d="M14.70,4.73 L14.88,4.06 L16.12,4.06 L16.30,4.73 L16.68,4.88 L17.28,4.54 L18.16,5.42 L17.82,6.02 L17.97,6.40 L18.64,6.58 L18.64,7.82 L17.97,8.00 L17.82,8.38 L18.16,8.98 L17.28,9.86 L16.68,9.52 L16.30,9.67 L16.12,10.34 L14.88,10.34 L14.70,9.67 L14.32,9.52 L13.72,9.86 L12.84,8.98 L13.18,8.38 L13.03,8.00 L12.36,7.82 L12.36,6.58 L13.03,6.40 L13.18,6.02 L12.84,5.42 L13.72,4.54 L14.32,4.88 Z M16.60,7.20 A1.1,1.1 0 1,0 14.40,7.20 A1.1,1.1 0 1,0 16.60,7.20 Z"/><circle cx="20.8" cy="4.8" r="1.2" fill="none" stroke="#2a2a2a" stroke-width="1.05"/></svg>
<div class="t" style="left:24.10px;top:521px;font-size:8.5px;font-weight:400;color:#2e2e2e;">cups.service</div>
<div class="t" style="left:151.10px;top:521px;font-size:8.5px;font-weight:400;color:#2e2e2e;">Enabled</div>
<div class="t" style="left:-72.60px;width:300px;text-align:right;top:521px;font-size:8.5px;font-weight:400;color:#2e2e2e;transform:scaleX(0.9300);transform-origin:right;">2150</div>
<div class="t" style="left:232.20px;top:521px;font-size:8.5px;font-weight:400;color:#2e2e2e;">Active</div>
<div class="t" style="left:287.30px;top:521px;font-size:8.5px;font-weight:400;color:#2e2e2e;">Loaded</div>
<div class="t" style="left:337.60px;top:521px;font-size:8.5px;font-weight:400;color:#2e2e2e;">Running</div>
<div class="t" style="left:140.60px;width:300px;text-align:right;top:521px;font-size:8.5px;font-weight:400;color:#2e2e2e;transform:scaleX(0.9300);transform-origin:right;">5.0 MiB</div>
<div class="t" style="left:446.20px;top:521px;font-size:8.5px;font-weight:400;color:#2e2e2e;word-spacing:1.2px;">CUPS Scheduler</div>
</div></div>
<div class="a" style="left:11.00px;top:517.00px;width:718.00px;height:1.00px;background:repeating-linear-gradient(90deg,#d2d2d2 0px,#d2d2d2 2px,#ececec 2px,#ececec 4px,#d8d8d8 4px,#d8d8d8 7px,#f2f2f2 7px,#f2f2f2 9px)"></div>
<div class="a" style="left:72.80px;top:254.80px;width:76.20px;height:129.80px;box-sizing:border-box;border:1px solid #dedede;border-radius:6px;background:#fff;box-shadow:0 1px 4px rgba(0,0,0,0.10)"></div>
<div class="a" style="left:77.20px;top:258.90px;width:67.60px;height:13.90px;background:#0a5cf4;border-radius:4px"></div>
<div class="t" style="left:96.60px;top:262px;font-size:8.5px;font-weight:400;color:#fff;transform:scaleX(1.0138);transform-origin:left;">Start</div>
<div class="t" style="left:96.60px;top:277px;font-size:8.5px;font-weight:400;color:#2e2e2e;">Stop</div>
<div class="t" style="left:96.60px;top:291px;font-size:8.5px;font-weight:400;color:#2e2e2e;transform:scaleX(0.9852);transform-origin:left;">Restart</div>
<div class="t" style="left:96.60px;top:306px;font-size:8.5px;font-weight:400;color:#2e2e2e;">Reload</div>
<div class="t" style="left:96.60px;top:321px;font-size:8.5px;font-weight:400;color:#2e2e2e;transform:scaleX(0.9823);transform-origin:left;">Enable</div>
<div class="t" style="left:96.60px;top:336px;font-size:8.5px;font-weight:400;color:#2e2e2e;transform:scaleX(1.0050);transform-origin:left;">Disable</div>
<div class="t" style="left:96.60px;top:350px;font-size:8.5px;font-weight:400;color:#2e2e2e;transform:scaleX(0.9231);transform-origin:left;">Mask</div>
<div class="t" style="left:96.60px;top:370px;font-size:8.5px;font-weight:400;color:#2e2e2e;transform:scaleX(1.0198);transform-origin:left;">Details</div>
<div class="a" style="left:83.25px;top:350.40px;width:8.50px;height:9.35px;box-sizing:border-box;border:1px solid #cfcfcf;border-radius:2px;background:#fff"></div>
<div class="a" style="left:78.20px;top:364.00px;width:66.20px;height:0.80px;background:#ececec"></div>
<div class="t" style="left:10.80px;top:524px;font-size:8.8px;font-weight:400;color:#333;transform:scaleX(1.0107);transform-origin:left;">Note: This tab is not reloaded automatically. Manually reload for changes.</div>
</div></div>
<div class="a" style="left:5px;top:4px;width:730px;height:535px;box-sizing:border-box;border-radius:8px;border:1px solid rgba(255,255,255,0.55)"></div>
</body></html>
